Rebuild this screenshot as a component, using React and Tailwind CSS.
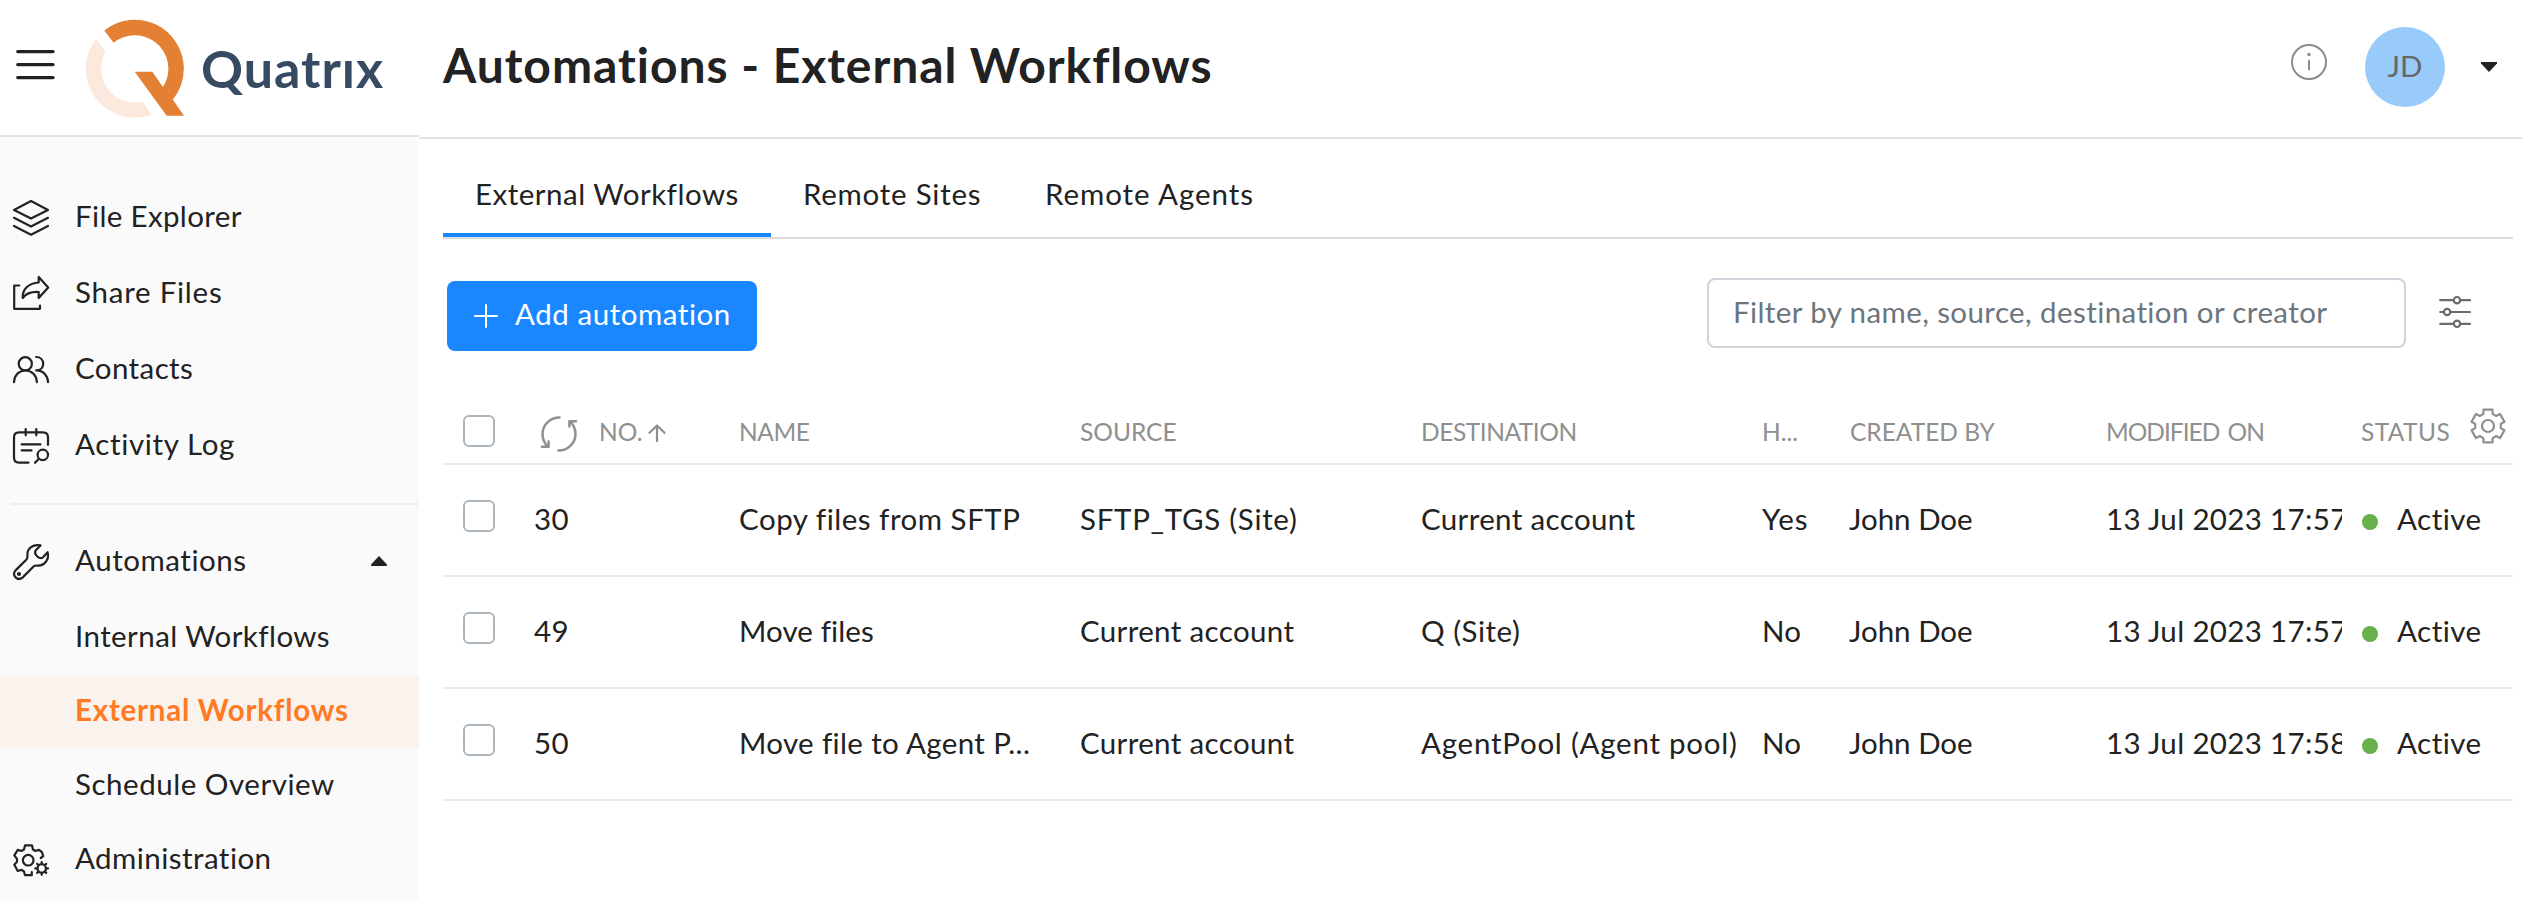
import React from 'react';

// Builds the outline of a cog wheel as an svg path
const cogPath = (cx, cy, outer, inner, teeth, top = 0.27, root = 0.36) => {
  const points = [];
  for (let i = 0; i < teeth; i++) {
    const mid = (i * 2 * Math.PI) / teeth - Math.PI / 2;
    [[inner, -root], [outer, -top], [outer, top], [inner, root]].forEach(([r, a]) => {
      points.push(`${(cx + r * Math.cos(mid + a)).toFixed(2)} ${(cy + r * Math.sin(mid + a)).toFixed(2)}`);
    });
  }
  return `M${points.join('L')}Z`;
};

const Icon = ({ children, className = '', strokeWidth = 2.2 }) => (
  <svg
    viewBox="0 0 36 36"
    fill="none"
    stroke="currentColor"
    strokeWidth={strokeWidth}
    strokeLinecap="round"
    strokeLinejoin="round"
    className={`w-9 h-9 shrink-0 overflow-visible ${className}`}
  >
    {children}
  </svg>
);

const LayersIcon = () => (
  <Icon>
    <path d="M18 1L35 10L18 18.6L1 10Z" />
    <path d="M1 17.8L18 26.4L35 17.8" />
    <path d="M1 26L18 34.7L35 26" />
  </Icon>
);

const ShareIcon = () => (
  <Icon>
    <path d="M6.3 9.5H1.2V32.8H27V29.6" />
    <path d="M25.7 1V6.5C16 7 9.3 13 9.7 22C13 17.5 18 15.6 25.7 16V22L35.2 11.5Z" />
  </Icon>
);

const ContactsIcon = () => (
  <Icon>
    <circle cx="12.3" cy="11.8" r="6.6" />
    <path d="M1 30.2C1.2 23.5 6 18.5 12.4 18.5S23.7 23.5 23.9 30.2" />
    <path d="M23.2 5C27.5 5 30.2 8 30.2 11.7S27.5 18.4 23.2 18.4C30 18.4 34.8 23.5 35 30.2" />
  </Icon>
);

const ActivityIcon = () => (
  <Icon>
    <path d="M35 16.8V9.5C35 6 33.5 4.3 30 4.3H6C2.5 4.3 1 6 1 9.5V29.5C1 33 2.5 34.6 6 34.6H15.5" />
    <path d="M12.7 1V7.3M23.3 1V7.3M8.7 16.4H27.4M8.7 22.4H18.5" />
    <circle cx="29.8" cy="26.9" r="5.2" />
    <path d="M25.8 30.8L22 34.8" />
  </Icon>
);

const WrenchIcon = () => (
  <Icon>
    <path d="M27.5 1.4C20-.3 14 4.5 14.4 11C14.5 13.5 14.8 14.2 13.5 15.5L2.3 26.6C-1.5 31.5 4.5 37.5 9.5 33.6L20.8 22.3C21.8 21.3 22.5 21.3 24.5 21.6C31.5 22 36.5 15.5 34.6 8.2L30 13.3C26.5 16 20.2 10 22.8 6.3Z" />
    <circle cx="6" cy="30" r="1" fill="currentColor" />
  </Icon>
);

const AdminIcon = () => (
  <Icon>
    <path d="M30.2 14.2L28.9 10.2L26 7.9L22.5 9L20 7.5L19 3.4H12L11 7.5L8.3 9L4.8 7.9L1.3 13.3L4 16.8V19.8L1.3 22.7L4.8 29L8.5 27.8L11 29.5L12 33.2H18.8V30M30.2 14.2L27.8 16" />
    <circle cx="15.2" cy="18.2" r="5.3" />
    <circle cx="28.7" cy="26.4" r="4.2" />
    <path d="M28.7 22V20M28.7 32.8V30.8M33.1 26.4H35M22.3 26.4H24.3M31.8 23.3L33.2 21.9M24.2 30.9L25.6 29.5M31.8 29.5L33.2 30.9M24.2 21.9L25.6 23.3" />
  </Icon>
);

const QuatrixMark = () => (
  <svg viewBox="0 0 102 102" className="w-[102px] h-[102px] shrink-0">
    <path
      fill="#e48033"
      d="M20.3 12.4A49 49 0 0 1 99.8 50.7A49 49 0 0 1 88.8 81.6L100 97.8H82.7L50.7 53.7H68.3L78.9 69A33.5 33.5 0 0 0 50.8 17.2A33.5 33.5 0 0 0 29.6 24.8Z"
    />
    <path
      fill="#fbe9de"
      d="M12.3 20.4A49 49 0 0 0 1.8 50.7A49 49 0 0 0 50.8 99.7A49 49 0 0 0 67.6 96.7L58.7 83.6A33.5 33.5 0 0 1 17.3 50.7A33.5 33.5 0 0 1 21.3 34.1Z"
    />
  </svg>
);

const Caret = ({ up = false, className = '' }) => (
  <svg viewBox="0 0 16 10" className={`w-4 h-2.5 shrink-0 ${className}`} fill="#222">
    <path d={up ? 'M8 0L16 8.5V10H0V8.5Z' : 'M8 10L16 1.5V0H0V1.5Z'} />
  </svg>
);

const mainLinks = [
  { label: 'File Explorer', icon: LayersIcon, track: 'tracking-[0.35px]' },
  { label: 'Share Files', icon: ShareIcon, track: 'tracking-[0.75px]' },
  { label: 'Contacts', icon: ContactsIcon, track: 'tracking-[0.4px]' },
  { label: 'Activity Log', icon: ActivityIcon, track: 'tracking-[0.65px]' },
];

const automationLinks = [
  { label: 'Internal Workflows', track: 'tracking-[0.43px]' },
  { label: 'External Workflows', track: 'tracking-[0.77px]', active: true },
  { label: 'Schedule Overview', track: 'tracking-[0.53px]' },
];

const tabs = [
  { label: 'External Workflows', className: 'w-[328px] border-[#1a87ff] tracking-[0.5px]' },
  { label: 'Remote Sites', className: 'w-[242px] border-transparent tracking-[0.75px]' },
  { label: 'Remote Agents', className: 'w-[272px] border-transparent tracking-[0.95px]' },
];

const rows = [
  { no: '30', name: 'Copy files from SFTP', source: 'SFTP_TGS (Site)', destination: 'Current account', h: 'Yes', modified: '13 Jul 2023 17:57' },
  { no: '49', name: 'Move files', source: 'Current account', destination: 'Q (Site)', h: 'No', modified: '13 Jul 2023 17:57' },
  { no: '50', name: 'Move file to Agent P...', source: 'Current account', destination: 'AgentPool (Agent pool)', h: 'No', modified: '13 Jul 2023 17:58' },
];

// Letter spacing of the cells that differ from the default one
const cellTracking = {
  'Copy files from SFTP': 'tracking-[0.5px]',
  'SFTP_TGS (Site)': 'tracking-[0.7px]',
  'Move files': 'tracking-[0.1px]',
  'Q (Site)': 'tracking-[0.5px]',
  'AgentPool (Agent pool)': 'tracking-[0.75px]',
  Yes: 'tracking-[1px]',
  No: 'tracking-[0.1px]',
};

const gridCols = 'grid grid-cols-[91px_205px_341px_341px_341px_87px_257px_255px_152px] items-center';

const Checkbox = ({ className = '' }) => (
  <span className={`block w-8 h-8 ml-5 rounded-md border-2 border-[#adb5bd] bg-white ${className}`} />
);

const Cell = ({ children, className = '' }) => (
  <span className={`pb-[3px] ${cellTracking[children] || 'tracking-[0.35px]'} ${className}`}>{children}</span>
);

const Sidebar = () => (
  <aside className="w-[419px] h-[901px] shrink-0 flex flex-col">
    <div className="h-[137px] border-b-2 border-[#e2e2e2] flex items-start">
      <svg viewBox="0 0 40 32" className="w-10 h-8 ml-4 mt-[49px]" stroke="#222" strokeWidth="3.4" strokeLinecap="round">
        <path d="M1.8 2.6H37M1.8 15.6H37M1.8 28.6H37" />
      </svg>
      <div className="ml-7 mt-[18px] flex items-start">
        <QuatrixMark />
        <span className="ml-[15px] mt-5 text-[52px] leading-[60px] font-bold tracking-[1px] text-[#364a61]">Quatrıx</span>
      </div>
    </div>

    <nav className="flex-1 bg-[#fafafa] rounded-tr-xl pt-[43px]">
      {mainLinks.map(({ label, icon: LinkIcon, track }) => (
        <div key={label} className="h-[76px] pl-[13px] flex items-center gap-[26px]">
          <LinkIcon />
          <span className={`pb-[5px] ${track}`}>{label}</span>
        </div>
      ))}

      <div className="mt-[19px] ml-[11px] h-0.5 bg-[#eee]" />

      <div className="mt-[19px] h-[76px] pl-[13px] pr-8 flex items-center gap-[26px]">
        <WrenchIcon />
        <span className="pb-[5px] tracking-[0.55px]">Automations</span>
        <Caret up className="ml-auto mb-0.5" />
      </div>

      <div className="mt-[3px] flex flex-col gap-1">
        {automationLinks.map(({ label, track, active }) => (
          <div
            key={label}
            className={`h-[70px] pl-[75px] pb-[5px] flex items-center ${track} ${active ? 'bg-[#faf2ed] text-[#ff7a22] font-bold' : ''}`}
          >
            {label}
          </div>
        ))}
        <div className="h-[70px] pl-[13px] flex items-center gap-[26px]">
          <AdminIcon />
          <span className="pb-[5px] tracking-[0.45px]">Administration</span>
        </div>
      </div>
    </nav>
  </aside>
);

const Header = () => (
  <header className="h-[139px] border-b-2 border-[#e2e2e2] pl-6 pr-[25px] flex items-start">
    <h1 className="mt-[35px] text-[48px] leading-[60px] font-bold tracking-[0.95px]">Automations - External Workflows</h1>
    <Icon className="ml-auto mt-11 text-[#8c8c8c]" strokeWidth={2}>
      <circle cx="18" cy="18" r="17" />
      <path d="M18 16.5V25.5" />
      <circle cx="18" cy="10.5" r="0.8" fill="currentColor" />
    </Icon>
    <div className="ml-[38px] mt-[27px] w-20 h-20 rounded-full bg-[#98cbfa] text-[#666] flex items-center justify-center pb-[3px]">
      JD
    </div>
    <Caret className="ml-9 mt-[62px]" />
  </header>
);

const Tabs = () => (
  <div className="h-[100px] mr-[9px] border-b-2 border-[#dcdcdc] flex">
    {tabs.map(({ label, className }) => (
      <div key={label} className={`pl-8 pt-[15px] border-b-4 flex items-center whitespace-nowrap ${className}`}>
        {label}
      </div>
    ))}
  </div>
);

const Toolbar = () => (
  <div className="mt-[39px] ml-1 flex items-start">
    <button className="mt-[3px] w-[310px] h-[70px] rounded-lg bg-[#1a87ff] text-white flex items-center">
      <svg viewBox="0 0 24 24" className="ml-[27px] w-6 h-6" stroke="white" strokeWidth="2" strokeLinecap="round">
        <path d="M12 1V23M1 12H23" />
      </svg>
      <span className="ml-[17px] pb-1 tracking-[0.55px]">Add automation</span>
    </button>
    <div className="ml-auto w-[699px] h-[70px] rounded-lg border-2 border-[#ced4da] text-[#6c757d] tracking-[0.4px] pl-6 pb-[3px] flex items-center">
      Filter by name, source, destination or creator
    </div>
    <svg viewBox="0 0 32 34" className="ml-[33px] mt-[17px] mr-[51px] w-8 h-[34px]" fill="none" stroke="#6b6b6f" strokeWidth="2.2" strokeLinecap="round">
      <path d="M1.2 5.2H14.5M21.5 5.2H31M1.2 17H4.6M11.6 17H31M1.2 28.8H14.5M21.5 28.8H31" />
      <circle cx="18" cy="5.2" r="3.2" />
      <circle cx="8.1" cy="17" r="3.2" />
      <circle cx="18" cy="28.8" r="3.2" />
    </svg>
  </div>
);

const TableHead = () => (
  <div className={`${gridCols} h-[65px] border-b-2 border-[#ececec] text-[24.5px] leading-8 text-[#8f8f8f]`}>
    <Checkbox className="mb-px" />
    <div className="flex items-center">
      <Icon className="ml-[7px] mt-[5px]" strokeWidth={2.5}>
        <path d="M18.5 1.5C9 1.5 1.5 9 1.5 18C1.5 23 3.5 27 6.5 30.5M.9 30.8H7.6V25.5" />
        <path d="M17.5 34.5C27 34.5 34.5 27 34.5 18C34.5 13 32.5 9 29.5 5.5M35 5.2H28.4V10.5" />
      </Icon>
      <span className="ml-[22px]">NO.</span>
      <svg viewBox="0 0 18 18" className="ml-[5px] mt-0.5 w-[18px] h-[18px]" fill="none" stroke="currentColor" strokeWidth="2.2" strokeLinecap="round" strokeLinejoin="round">
        <path d="M9 17V1.5M1.5 8.8L9 1.5L16.5 8.8" />
      </svg>
    </div>
    <span className="tracking-[-0.4px]">NAME</span>
    <span>SOURCE</span>
    <span className="tracking-[-0.45px]">DESTINATION</span>
    <span>H...</span>
    <span className="pl-px">CREATED BY</span>
    <span className="tracking-[-1px] [word-spacing:3px]">MODIFIED ON</span>
    <div className="flex items-center">
      <span className="tracking-[0.4px]">STATUS</span>
      <Icon className="ml-auto mr-[7px] mb-[11px]" strokeWidth={2.2}>
        <path d={cogPath(18, 18, 17, 13, 6)} />
        <circle cx="18" cy="18" r="6" />
      </Icon>
    </div>
  </div>
);

const TableRow = ({ row }) => (
  <div className={`${gridCols} h-28 border-b-2 border-[#ececec] whitespace-nowrap`}>
    <Checkbox className="mb-2" />
    <Cell>{row.no}</Cell>
    <Cell>{row.name}</Cell>
    <Cell>{row.source}</Cell>
    <Cell>{row.destination}</Cell>
    <Cell>{row.h}</Cell>
    <span className="pb-[3px]">John Doe</span>
    <Cell className="mr-[19px] overflow-hidden">{row.modified}</Cell>
    <div className="flex items-center">
      <span className="w-4 h-4 mt-1 ml-px rounded-full bg-[#67b04b]" />
      <span className="ml-[19px] pb-[3px] tracking-[0.5px]">Active</span>
    </div>
  </div>
);

export default function App() {
  return (
    <div className="w-[2522px] h-[901px] flex overflow-hidden bg-white font-['Lato',sans-serif] text-[29.5px] leading-9 text-[#222]">
      <Sidebar />
      <div className="flex-1">
        <Header />
        <main className="pl-6">
          <Tabs />
          <Toolbar />
          <div className="mt-[49px] mr-[9px]">
            <TableHead />
            {rows.map((row) => (
              <TableRow key={row.no} row={row} />
            ))}
          </div>
        </main>
      </div>
    </div>
  );
}
